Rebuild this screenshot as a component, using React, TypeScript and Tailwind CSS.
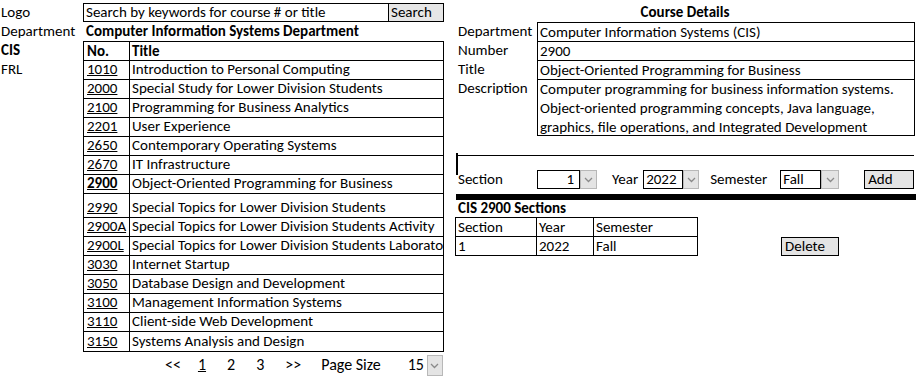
import React from "react";

const font = { fontFamily: "Carlito, Lato, 'Liberation Sans', sans-serif" };

const courses: { no: string; title: string; bold?: boolean; tall?: boolean }[] = [
  { no: "1010", title: "Introduction to Personal Computing" },
  { no: "2000", title: "Special Study for Lower Division Students" },
  { no: "2100", title: "Programming for Business Analytics" },
  { no: "2201", title: "User Experience" },
  { no: "2650", title: "Contemporary Operating Systems" },
  { no: "2670", title: "IT Infrastructure" },
  { no: "2900", title: "Object-Oriented Programming for Business", bold: true },
  { no: "2990", title: "Special Topics for Lower Division Students", tall: true },
  { no: "2900A", title: "Special Topics for Lower Division Students Activity" },
  { no: "2900L", title: "Special Topics for Lower Division Students Laboratory" },
  { no: "3030", title: "Internet Startup" },
  { no: "3050", title: "Database Design and Development" },
  { no: "3100", title: "Management Information Systems" },
  { no: "3110", title: "Client-side Web Development" },
  { no: "3150", title: "Systems Analysis and Design" },
];

function Arrow({ className = "" }: { className?: string }) {
  return (
    <div
      className={
        "flex items-center justify-center bg-[#e4e4e4] border border-[#b8b8b8] " +
        className
      }
    >
      <svg width="9" height="6" viewBox="0 0 9 6">
        <path d="M1 1 L4.5 4.5 L8 1" fill="none" stroke="#8a8a8a" strokeWidth="1.3" />
      </svg>
    </div>
  );
}

export default function App() {
  return (
    <div
      className="w-[919px] h-[379px] bg-white text-black text-[15px] leading-[19px] flex overflow-hidden"
      style={font}
    >
      {/* Left panel */}
      <div className="w-[455px] flex pt-[3px]">
        <div className="w-[83px] pl-[1px] flex flex-col">
          <div className="h-[19px]">Logo</div>
          <div className="h-[19px]">Department</div>
          <div className="h-[19px] font-bold">CIS</div>
          <div className="h-[19px]">FRL</div>
        </div>
        <div className="w-[361px] flex flex-col">
          <div className="flex h-[19px]">
            <div className="w-[306px] border border-black pl-[2px] leading-[17px]">
              Search by keywords for course # or title
            </div>
            <div className="w-[55px] border border-l-0 border-black bg-[#e6e6e6] pl-[2px] leading-[17px]">
              Search
            </div>
          </div>
          <div className="h-[19px] font-bold pl-[3px]">
            Computer Information Systems Department
          </div>
          <div className="border border-black w-[361px]">
            <div className="flex h-[19px] border-b border-black font-bold">
              <div className="w-[46px] border-r border-black pl-[3px]">No.</div>
              <div className="flex-1 pl-[2px]">Title</div>
            </div>
            {courses.map((c, i) => (
              <div
                key={c.no}
                className={
                  "flex border-black " +
                  (c.tall ? "h-[24px] items-end " : "h-[19px] ") +
                  (i < courses.length - 1 ? "border-b" : "")
                }
              >
                <div
                  className={
                    "w-[46px] h-full flex items-end border-r border-black pl-[3px] underline " +
                    (c.bold ? "font-bold" : "")
                  }
                >
                  <span>{c.no}</span>
                </div>
                <div className="flex-1 h-full flex items-end pl-[2px] whitespace-nowrap overflow-hidden">
                  <span>{c.title}</span>
                </div>
              </div>
            ))}
          </div>
          <div className="flex items-center h-[25px] text-[16px]">
            <span className="ml-[82px]">&lt;&lt;</span>
            <span className="ml-[17px] underline">1</span>
            <span className="ml-[21px]">2</span>
            <span className="ml-[21px]">3</span>
            <span className="ml-[21px]">&gt;&gt;</span>
            <span className="ml-[20px]">Page Size</span>
            <span className="ml-[27px]">15</span>
            <Arrow className="ml-[3px] w-[16px] h-[21px] mt-[2px]" />
          </div>
        </div>
      </div>

      {/* Right panel */}
      <div className="w-[464px] flex flex-col pt-[3px]">
        <div className="h-[19px] font-bold text-center pr-[4px]">Course Details</div>
        <div className="flex">
          <div className="w-[82px] pl-[3px] flex flex-col">
            <div className="h-[19px]">Department</div>
            <div className="h-[19px]">Number</div>
            <div className="h-[19px]">Title</div>
            <div className="h-[19px]">Description</div>
          </div>
          <div className="w-[378px] border border-black">
            <div className="h-[19px] border-b border-black pl-[2px] leading-[18px]">
              Computer Information Systems (CIS)
            </div>
            <div className="h-[19px] border-b border-black pl-[2px] leading-[18px]">2900</div>
            <div className="h-[19px] border-b border-black pl-[2px] leading-[18px]">
              Object-Oriented Programming for Business
            </div>
            <div className="h-[55px] pl-[2px] overflow-hidden">
              Computer programming for business information systems.
              <br />
              Object-oriented programming concepts, Java language,
              <br />
              graphics, file operations, and Integrated Development
            </div>
          </div>
        </div>

        <div className="relative mt-[19px] ml-[1px] w-[458px]">
          <div className="absolute left-0 top-[-2px] w-[2px] h-[22px] bg-black" />
          <div className="h-px bg-black" />
        </div>
        <div className="flex items-center h-[19px] mt-[14px]">
          <span className="pl-[3px] w-[82px]">Section</span>
          <div className="w-[43px] h-[19px] border border-black text-right pr-[5px] leading-[17px]">1</div>
          <Arrow className="w-[17px] h-[19px]" />
          <span className="ml-[15px]">Year</span>
          <div className="ml-[5px] w-[40px] h-[19px] border border-black pl-[2px] leading-[17px]">2022</div>
          <Arrow className="w-[16px] h-[19px]" />
          <span className="ml-[11px]">Semester</span>
          <div className="ml-[13px] w-[41px] h-[19px] border border-black pl-[2px] leading-[17px]">Fall</div>
          <Arrow className="w-[18px] h-[19px]" />
          <div className="ml-[25px] w-[50px] h-[19px] border border-black bg-[#e4e4e4] pl-[3px] leading-[17px]">
            Add
          </div>
        </div>
        <div className="mt-[5px] ml-[1px] w-[460px] h-[6px] bg-black" />
        <div className="h-[17px] font-bold pl-[3px] leading-[17px]">CIS 2900 Sections</div>
        <div className="flex items-end">
          <div className="w-[243px] border border-black">
            <div className="flex h-[19px] border-b border-black">
              <div className="w-[81px] border-r border-black pl-[2px]">Section</div>
              <div className="w-[57px] border-r border-black pl-[2px]">Year</div>
              <div className="flex-1 pl-[2px]">Semester</div>
            </div>
            <div className="flex h-[18px]">
              <div className="w-[81px] border-r border-black pl-[2px] leading-[18px]">1</div>
              <div className="w-[57px] border-r border-black pl-[2px] leading-[18px]">2022</div>
              <div className="flex-1 pl-[2px] leading-[18px]">Fall</div>
            </div>
          </div>
          <div className="ml-[83px] w-[58px] h-[19px] border border-black bg-[#e4e4e4] pl-[3px] leading-[17px]">
            Delete
          </div>
        </div>
      </div>
    </div>
  );
}
